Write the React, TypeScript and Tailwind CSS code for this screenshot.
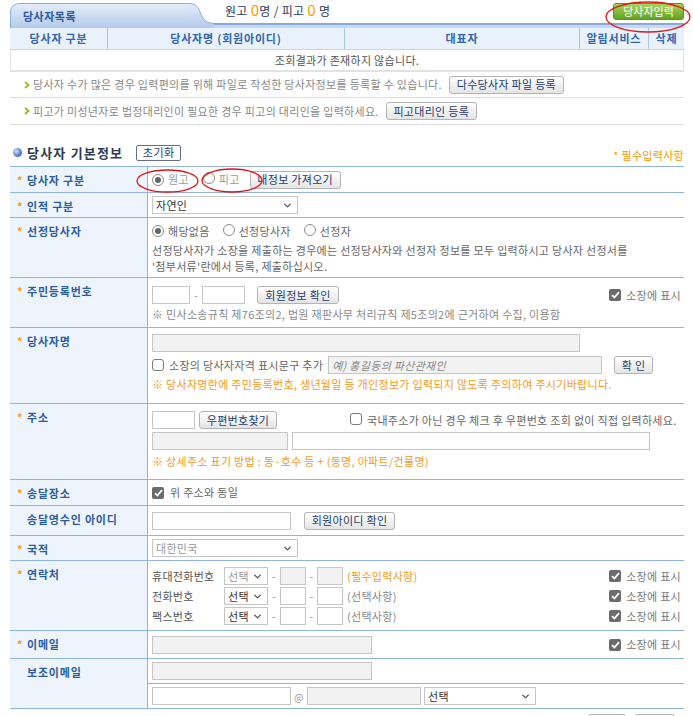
import React from 'react';
import { ChevronDown } from 'lucide-react';

type Kids = { children?: React.ReactNode; className?: string };

const Btn: React.FC<Kids> = ({ children, className = '' }) => (
  <span
    className={`inline-flex items-center justify-center h-[18px] px-[6px] border border-[#b4b4b4] rounded-[3px] bg-linear-to-b from-white to-[#e4e4e4] text-[#1d3b6d] text-[11px] leading-none whitespace-nowrap shrink-0 ${className}`}
  >
    {children}
  </span>
);

const Box: React.FC<Kids & { gray?: boolean }> = ({ children, className = '', gray = false }) => (
  <div className={`h-[18px] shrink-0 border border-[#c6c6c6] flex items-center ${gray ? 'bg-[#f2f2f2]' : 'bg-white'} ${className}`}>
    {children}
  </div>
);

const Select: React.FC<{ text: string; className: string; muted?: boolean }> = ({ text, className, muted = false }) => (
  <div className={`h-[18px] shrink-0 border border-[#c6c6c6] bg-white flex items-center justify-between pl-[3px] pr-[4px] ${className}`}>
    <span className={muted ? 'text-[#999]' : 'text-[#333]'}>{text}</span>
    <ChevronDown size={11} strokeWidth={3} className="text-[#555]" />
  </div>
);

const Radio: React.FC<{ checked?: boolean }> = ({ checked = false }) => (
  <span className="inline-flex w-[12px] h-[12px] shrink-0 rounded-full border border-[#8c8c8c] bg-white items-center justify-center">
    {checked && <span className="w-[6px] h-[6px] rounded-full bg-[#666]" />}
  </span>
);

const Check: React.FC<{ checked?: boolean }> = ({ checked = false }) =>
  checked ? (
    <span className="inline-flex w-[12px] h-[12px] shrink-0 rounded-[2px] bg-[#6b6b6b] items-center justify-center">
      <svg width="9" height="8" viewBox="0 0 9 8">
        <path d="M1 4.2 L3.4 6.5 L8 1.2" fill="none" stroke="#fff" strokeWidth="1.8" />
      </svg>
    </span>
  ) : (
    <span className="inline-block w-[12px] h-[12px] shrink-0 rounded-[3px] border border-[#7a7a7a] bg-white" />
  );

const ShowOnDoc = () => (
  <div className="ml-auto flex items-center gap-[5px] text-[#777]">
    <Check checked />
    소장에 표시
  </div>
);

const Arrow = () => (
  <svg width="6" height="8" viewBox="0 0 6 8" className="shrink-0">
    <path d="M1 1 L4.5 4 L1 7" fill="none" stroke="#a4b82a" strokeWidth="2" />
  </svg>
);

const Row: React.FC<Kids & { label: string; star?: boolean; body?: string }> = ({
  label,
  star = true,
  className = '',
  body = '',
  children,
}) => (
  <div className={`grid grid-cols-[138px_1fr] border-b border-[#8fb3e3] ${className}`}>
    <div className="flex bg-[#eef4fc] border-r border-[#8fb3e3] pl-[7px] pt-[6px] leading-[14px] font-bold text-[#2d5d9f] text-[11px] tracking-[0.8px]">
      <span className="w-[10px] text-[#f39a1e]">{star ? '*' : ''}</span>
      <span>{label}</span>
    </div>
    <div className={`pl-[4px] pr-[3px] ${body}`}>{children}</div>
  </div>
);

const PhoneLine: React.FC<{ label: string; gray?: boolean; note: string; required?: boolean }> = ({
  label,
  gray = false,
  note,
  required = false,
}) => (
  <div className="flex items-center h-[20px]">
    <span className="w-[72px] text-[#555]">{label}</span>
    <Select text="선택" className="w-[44px]" muted={gray} />
    <span className="w-[12px] text-center text-[#999]">-</span>
    <Box gray={gray} className="w-[26px]" />
    <span className="w-[11px] text-center text-[#999]">-</span>
    <Box gray={gray} className="w-[26px]" />
    <span className={`ml-[4px] ${required ? 'text-[#f39a1e]' : 'text-[#888]'}`}>{note}</span>
    <ShowOnDoc />
  </div>
);

export default function App() {
  return (
    <div className="relative w-[693px] min-h-[716px] bg-white font-['Noto_Sans_CJK_KR','Noto_Sans',sans-serif] text-[11px] tracking-[0.3px] text-[#666]">
      <div className="ml-[10px] w-[674px]">
        {/* 당사자목록 tab bar */}
        <div className="flex h-[28px] items-end">
          <div className="flex h-[25px]">
            <div className="w-[178px] rounded-tl-[9px] border-t border-l border-[#8aaedc] bg-linear-to-b from-[#e3edf9] to-[#b3cbeb] pl-[12px] flex items-center font-bold text-[#2a5b9c] tracking-[0.5px]">
              당사자목록
            </div>
            <svg width="26" height="25" viewBox="0 0 26 25" className="shrink-0">
              <defs>
                <linearGradient id="tabg" x1="0" y1="0" x2="0" y2="1">
                  <stop offset="0" stopColor="#e3edf9" />
                  <stop offset="1" stopColor="#b3cbeb" />
                </linearGradient>
              </defs>
              <path d="M0 0.5 C7 0.5 9 2 12 9 C15 17 18 20 26 20.5 L26 25 L0 25 Z" fill="url(#tabg)" />
              <path d="M0 0.5 C7 0.5 9 2 12 9 C15 17 18 20 26 20.5" fill="none" stroke="#8aaedc" />
            </svg>
          </div>
          <div className="flex-1 h-[28px] flex flex-col">
            <div className="h-[23px] flex items-start">
              <div className="pl-[11px] pt-[1px] leading-[18px] text-[12px] text-[#2b3b5c]">
                원고 <span className="text-[15px] text-[#f7a000]">0</span>명 / 피고 <span className="text-[15px] text-[#f7a000]">0</span> 명
              </div>
              <div className="ml-auto mt-[3px] h-[17px] w-[71px] rounded-[3px] border border-[#5a9420] bg-linear-to-b from-[#a6d65a] to-[#62a222] text-white flex items-center justify-center tracking-normal">
                당사자입력
              </div>
            </div>
            <div className="h-[5px] border-t-2 border-[#86a9da] bg-[#c6d9f2]" />
          </div>
        </div>

        {/* list header */}
        <div className="grid grid-cols-[98px_237px_235px_69px_1fr] h-[22px] bg-[#e9f1fb] border-b border-[#c5d6ec] font-bold text-[#3266ad] tracking-[0.8px]">
          <div className="flex items-center justify-center border-r border-[#a8c5ea]">당사자 구분</div>
          <div className="flex items-center justify-center border-r border-[#a8c5ea]">당사자명 (회원아이디)</div>
          <div className="flex items-center justify-center border-r border-[#a8c5ea]">대표자</div>
          <div className="flex items-center justify-center border-r border-[#a8c5ea]">알림서비스</div>
          <div className="flex items-center justify-center">삭제</div>
        </div>
        <div className="h-[22px] flex items-center justify-center border-x border-b-2 border-[#e2e2e2] text-[#555]">
          조회결과가 존재하지 않습니다.
        </div>

        {/* info lines */}
        <div className="h-[26px] flex items-center pl-[14px] gap-[3px] border-b border-[#dcdcdc] text-[#888]">
          <Arrow />
          <span>당사자 수가 많은 경우 입력편의를 위해 파일로 작성한 당사자정보를 등록할 수 있습니다.</span>
          <Btn className="ml-[4px] w-[115px]">다수당사자 파일 등록</Btn>
        </div>
        <div className="h-[27px] flex items-center pl-[14px] gap-[3px] border-b border-[#dcdcdc] text-[#888]">
          <Arrow />
          <span>피고가 미성년자로 법정대리인이 필요한 경우 피고의 대리인을 입력하세요.</span>
          <Btn className="ml-[4px] w-[91px]">피고대리인 등록</Btn>
        </div>

        {/* section header */}
        <div className="mt-[18px] mb-[4px] h-[19px] flex items-center">
          <span className="ml-[3px] w-[9px] h-[9px] rounded-full bg-[radial-gradient(circle_at_35%_35%,#cfe0f7,#3d6fbf_70%)]" />
          <span className="ml-[5px] text-[13px] font-bold text-[#2f3b52] tracking-[1.2px]">당사자 기본정보</span>
          <span className="ml-[13px] h-[16px] w-[45px] flex items-center justify-center border border-[#66708a] rounded-[2px] bg-white text-[#1d3b6d] tracking-[0.5px]">
            초기화
          </span>
          <span className="ml-auto self-end leading-[14px] text-[#f39800]">* 필수입력사항</span>
        </div>

        {/* form table */}
        <div className="border-t border-[#8fb3e3]">
          <Row label="당사자 구분" className="h-[26px]" body="flex items-center">
            <Radio checked />
            <span className="ml-[4px] text-[#999]">원고</span>
            <span className="ml-[14px]">
              <Radio />
            </span>
            <span className="ml-[4px] text-[#999]">피고</span>
            <Btn className="ml-[10px] w-[91px]">내정보 가져오기</Btn>
          </Row>

          <Row label="인적 구분" className="h-[25px]" body="flex items-center">
            <Select text="자연인" className="w-[146px]" />
          </Row>

          <Row label="선정당사자" className="h-[60px]" body="pt-[6px]">
            <div className="h-[14px] flex items-center">
              <Radio checked />
              <span className="ml-[4px]">해당없음</span>
              <span className="ml-[13px]">
                <Radio />
              </span>
              <span className="ml-[4px]">선정당사자</span>
              <span className="ml-[13px]">
                <Radio />
              </span>
              <span className="ml-[4px]">선정자</span>
            </div>
            <div className="mt-[4px] leading-[16px]">
              선정당사자가 소장을 제출하는 경우에는 선정당사자와 선정자 정보를 모두 입력하시고 당사자 선정서를
              <br />
              '첨부서류'란에서 등록, 제출하십시오.
            </div>
          </Row>

          <Row label="주민등록번호" className="h-[50px]" body="pt-[8px]">
            <div className="flex items-center">
              <Box className="w-[38px]" />
              <span className="w-[12px] text-center text-[#999]">-</span>
              <Box className="w-[43px]" />
              <Btn className="ml-[12px] w-[82px]">회원정보 확인</Btn>
              <ShowOnDoc />
            </div>
            <div className="mt-[3px] leading-[14px] text-[#888]">
              ※ 민사소송규칙 제76조의2, 법원 재판사무 처리규칙 제5조의2에 근거하여 수집, 이용함
            </div>
          </Row>

          <Row label="당사자명" className="h-[76px]" body="pt-[6px]">
            <Box gray className="w-[428px]" />
            <div className="mt-[4px] flex items-center">
              <Check />
              <span className="ml-[5px]">소장의 당사자자격 표시문구 추가</span>
              <Box gray className="ml-[5px] w-[274px] pl-[3px]">
                <span className="italic text-[#888]">예) 홍길동의 파산관재인</span>
              </Box>
              <Btn className="ml-[12px] w-[39px]">확 인</Btn>
            </div>
            <div className="mt-[3px] leading-[14px] text-[#f39a1e]">
              ※ 당사자명란에 주민등록번호, 생년월일 등 개인정보가 입력되지 않도록 주의하여 주시기바랍니다.
            </div>
          </Row>

          <Row label="주소" className="h-[76px]" body="pt-[7px]">
            <div className="flex items-center">
              <Box className="w-[43px]" />
              <Btn className="ml-[4px] w-[78px]">우편번호찾기</Btn>
              <span className="ml-[73px]">
                <Check />
              </span>
              <span className="ml-[5px]">국내주소가 아닌 경우 체크 후 우편번호 조회 없이 직접 입력하세요.</span>
            </div>
            <div className="mt-[3px] flex items-center">
              <Box gray className="w-[136px]" />
              <Box className="ml-[4px] w-[358px]" />
            </div>
            <div className="mt-[4px] leading-[14px] text-[#f39a1e]">
              ※ 상세주소 표기 방법 : 동·호수 등 + (동명, 아파트/건물명)
            </div>
          </Row>

          <Row label="송달장소" className="h-[26px]" body="flex items-center">
            <Check checked />
            <span className="ml-[6px]">위 주소와 동일</span>
          </Row>

          <Row label="송달영수인 아이디" star={false} className="h-[30px]" body="flex items-center">
            <Box className="w-[139px]" />
            <Btn className="ml-[13px] w-[91px]">회원아이디 확인</Btn>
          </Row>

          <Row label="국적" className="h-[25px]" body="flex items-center">
            <Select text="대한민국" className="w-[146px]" muted />
          </Row>

          <Row label="연락처" className="h-[70px]" body="pt-[5px]">
            <PhoneLine label="휴대전화번호" gray note="(필수입력사항)" required />
            <PhoneLine label="전화번호" note="(선택사항)" />
            <PhoneLine label="팩스번호" note="(선택사항)" />
          </Row>

          <Row label="이메일" className="h-[28px]" body="flex items-center">
            <Box gray className="w-[220px]" />
            <ShowOnDoc />
          </Row>

          <Row label="보조이메일" star={false} className="h-[50px]" body="!pl-0 !pr-0 flex flex-col">
            <div className="h-[25px] flex items-center pl-[4px] border-b border-[#8fb3e3]">
              <Box gray className="w-[220px]" />
            </div>
            <div className="flex-1 flex items-center pl-[4px]">
              <Box className="w-[139px]" />
              <span className="w-[16px] text-center text-[#999] text-[10px]">@</span>
              <Box gray className="w-[114px]" />
              <Select text="선택" className="ml-[3px] w-[112px]" />
            </div>
          </Row>
        </div>

        {/* bottom buttons (cut off) */}
        <div className="mt-[5px] flex justify-end gap-[9px] pr-[9px]">
          <span className="h-[20px] w-[38px] border border-[#b4b4b4] rounded-[3px] bg-linear-to-b from-white to-[#e4e4e4]" />
          <span className="h-[20px] w-[40px] border border-[#b4b4b4] rounded-[3px] bg-linear-to-b from-white to-[#e4e4e4]" />
        </div>
      </div>

      {/* red highlight ellipses */}
      <svg className="absolute left-0 top-0 pointer-events-none" width="693" height="716">
        <ellipse cx="648" cy="17" rx="42" ry="15" fill="none" stroke="#e0161b" strokeWidth="1.3" />
        <ellipse cx="167.5" cy="181" rx="30.5" ry="11" fill="none" stroke="#e0161b" strokeWidth="1.3" />
        <ellipse cx="232" cy="180.5" rx="30" ry="11.5" fill="none" stroke="#e0161b" strokeWidth="1.3" />
      </svg>
    </div>
  );
}
